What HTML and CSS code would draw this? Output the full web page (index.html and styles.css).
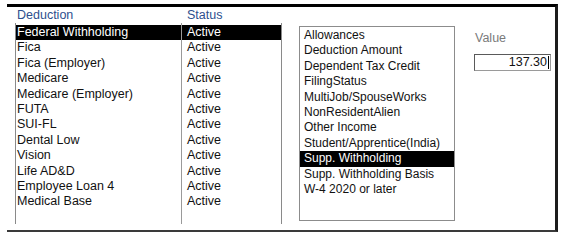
FILE: index.html
```html
<!DOCTYPE html>
<html>
<head>
<meta charset="utf-8">
<link rel="stylesheet" href="styles.css">
</head>
<body>
<div class="frame">
  <div class="left">
    <div class="head">
      <div class="h1">Deduction</div>
      <div class="h2">Status</div>
    </div>
    <div class="list">
      <div class="col name">
        <div class="row sel">Federal Withholding</div>
        <div class="row">Fica</div>
        <div class="row">Fica (Employer)</div>
        <div class="row">Medicare</div>
        <div class="row">Medicare (Employer)</div>
        <div class="row">FUTA</div>
        <div class="row">SUI-FL</div>
        <div class="row">Dental Low</div>
        <div class="row">Vision</div>
        <div class="row">Life AD&amp;D</div>
        <div class="row">Employee Loan 4</div>
        <div class="row">Medical Base</div>
      </div>
      <div class="col status">
        <div class="row sel">Active</div>
        <div class="row">Active</div>
        <div class="row">Active</div>
        <div class="row">Active</div>
        <div class="row">Active</div>
        <div class="row">Active</div>
        <div class="row">Active</div>
        <div class="row">Active</div>
        <div class="row">Active</div>
        <div class="row">Active</div>
        <div class="row">Active</div>
        <div class="row">Active</div>
      </div>
    </div>
  </div>
  <div class="params">
    <div class="row">Allowances</div>
    <div class="row">Deduction Amount</div>
    <div class="row">Dependent Tax Credit</div>
    <div class="row">FilingStatus</div>
    <div class="row">MultiJob/SpouseWorks</div>
    <div class="row">NonResidentAlien</div>
    <div class="row">Other Income</div>
    <div class="row">Student/Apprentice(India)</div>
    <div class="row sel">Supp. Withholding</div>
    <div class="row">Supp. Withholding Basis</div>
    <div class="row">W-4 2020 or later</div>
  </div>
  <div class="value">
    <div class="vlabel">Value</div>
    <div class="vbox"><span class="vtext">137.30</span><span class="caret"></span></div>
  </div>
</div>
</body>
</html>
```

FILE: styles.css
```css
html, body {
  margin: 0;
  padding: 0;
  background: #ffffff;
}
body {
  font-family: "Liberation Sans", Arial, sans-serif;
  font-size: 12.5px;
  color: #111;
}
.frame {
  margin: 4px 0 0 7px;
  width: 548px;
  height: 223px;
  border-top: 3px solid #000;
  border-right: 3px solid #1c1c1c;
  border-bottom: 2px solid #3a3a3a;
  display: flex;
  align-items: flex-start;
}
.left {
  margin-left: 8px;
  width: 267px;
  display: flex;
  flex-direction: column;
}
.head {
  display: flex;
  height: 16px;
  line-height: 16px;
  color: #2d4f8e;
}
.h1 {
  width: 166px;
  padding-left: 2px;
  box-sizing: border-box;
}
.h2 {
  padding-left: 6px;
}
.list {
  display: flex;
  height: 201px;
  border-left: 1px solid #8a8a8a;
  border-right: 1px solid #8a8a8a;
  box-sizing: border-box;
}
.col {
  padding-top: 2px;
  box-sizing: border-box;
}
.name {
  width: 166px;
  border-right: 1px solid #9a9a9a;
}
.status {
  flex: 1;
}
.row {
  height: 15.4px;
  line-height: 15.4px;
  white-space: nowrap;
}
.name .row {
  padding-left: 1px;
}
.status .row {
  padding-left: 5px;
}
.sel {
  background: #000;
  color: #fff;
}
.params {
  margin-left: 17px;
  margin-top: 19px;
  width: 156px;
  height: 195px;
  border: 1px solid #8c8c8c;
  box-sizing: border-box;
  padding-top: 1px;
  font-size: 12px;
}
.params .row {
  padding-left: 4px;
}
.value {
  margin-left: 19px;
  margin-top: 23px;
  display: flex;
  flex-direction: column;
}
.vlabel {
  color: #7a7a7a;
  line-height: 16px;
  height: 16px;
  padding-left: 1px;
}
.vbox {
  margin-top: 8px;
  width: 77px;
  height: 17px;
  box-sizing: border-box;
  border-top: 1px solid #5a5a5a;
  border-left: 1px solid #5a5a5a;
  border-bottom: 1px solid #9a9a9a;
  border-right: 1px solid #9a9a9a;
  display: flex;
  justify-content: flex-end;
  align-items: center;
  padding-right: 1px;
  line-height: 15px;
}
.caret {
  width: 1px;
  height: 13px;
  background: #000;
  margin-left: 1px;
}
```
